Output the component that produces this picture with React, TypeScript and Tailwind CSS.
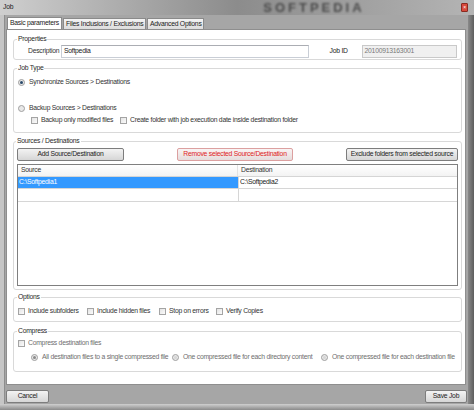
import { ReactNode } from "react";

function GroupBox({ title, className, children }: { title: string; className?: string; children: ReactNode }) {
    return (
        <fieldset className={`min-w-0 border border-[#d9d9d9] rounded-[3px] ${className ?? ""}`}>
            <legend className="leading-[8px] px-[1px] -ml-[1px] text-[#2a2a2a]">{title}</legend>
            {children}
        </fieldset>
    );
}

function CheckBox({ label, disabled = false, className }: { label: string; disabled?: boolean; className?: string }) {
    return (
        <div className={`flex items-center h-[9px] shrink-0 ${className ?? ""}`}>
            <div className="shrink-0 w-[7px] h-[7px] border border-[#a4a4a4] bg-gradient-to-br from-[#e4e4e4] to-[#fbfbfb]" />
            <span className={`ml-[3px] ${disabled ? "text-[#6e6e6e]" : "text-[#333]"}`}>{label}</span>
        </div>
    );
}

function Radio({
    label,
    checked = false,
    disabled = false,
    className,
}: {
    label: string;
    checked?: boolean;
    disabled?: boolean;
    className?: string;
}) {
    return (
        <div className={`flex items-center h-[9px] shrink-0 ${className ?? ""}`}>
            <div className="shrink-0 w-[7px] h-[7px] rounded-full border border-[#a0a0a0] bg-[#e8e8e8] flex items-center justify-center">
                {checked && <div className={`w-[3px] h-[3px] rounded-full ${disabled ? "bg-[#8a8a8a]" : "bg-[#2a4a6a]"}`} />}
                {!checked && disabled && <div className="w-[3px] h-[3px] rounded-full bg-[#d6d6d6]" />}
            </div>
            <span className={`ml-[4px] ${disabled ? "text-[#6e6e6e]" : "text-[#333]"}`}>{label}</span>
        </div>
    );
}

function Button({ children, className, danger = false }: { children: ReactNode; className?: string; danger?: boolean }) {
    return (
        <button
            className={`h-[13px] rounded-[2px] border flex items-center justify-center leading-none ${
                danger
                    ? "border-[#dca0a0] bg-gradient-to-b from-[#f9f4f4] to-[#e6dcdc] text-[#e02424]"
                    : "border-[#7d7d7d] bg-gradient-to-b from-[#f3f3f3] to-[#d6d6d6] text-[#222]"
            } ${className ?? ""}`}
        >
            {children}
        </button>
    );
}

export default function App() {
    return (
        <div className="w-[474px] h-[410px] flex flex-col overflow-hidden whitespace-nowrap bg-[#9e9e9e] font-['Liberation_Sans',Arial,sans-serif] text-[6.8px] tracking-[-0.25px] text-[#333]">
            {/* title bar */}
            <div className="h-[15px] flex items-center bg-gradient-to-r from-[#cfcfcf] via-[#8c8c8c] to-[#b4b4b4]">
                <span className="ml-[3px] text-[#1e1e1e]">Job</span>
                <span className="ml-[250px] text-[13px] font-bold tracking-[3px] text-[#4a4a4a] blur-[1.2px] leading-[14px]">
                    SOFTPEDIA
                </span>
                <div className="ml-auto mr-[6px] w-[7px] h-[9px] rounded-[1px] bg-[#d84a3c] border border-[#8a2a20] flex items-center justify-center text-[5px] text-white leading-none">
                    ×
                </div>
            </div>

            <div className="flex flex-1 min-h-0">
                <div className="w-[5px] shrink-0 bg-[#c6c6c6] border-r border-[#8e8e8e]" />
                <div className="flex-1 min-w-0 flex flex-col bg-[#a6a6a6]">
                    {/* tabs */}
                    <div className="h-[14px] flex items-end pl-[2px]">
                        <div className="h-[12px] w-[55px] bg-white border border-b-0 border-[#8a8a8a] flex items-center pl-[2px] text-[#222]">
                            Basic parameters
                        </div>
                        <div className="h-[11px] w-[83px] ml-[1px] bg-gradient-to-b from-[#f4f4f4] to-[#dcdcdc] border border-b-0 border-[#8a8a8a] flex items-center pl-[2px] text-[#222]">
                            Files Inclusions / Exclusions
                        </div>
                        <div className="h-[11px] w-[57px] ml-[1px] bg-gradient-to-b from-[#f4f4f4] to-[#dcdcdc] border border-b-0 border-[#8a8a8a] flex items-center pl-[2px] text-[#222]">
                            Advanced Options
                        </div>
                    </div>

                    {/* panel */}
                    <div className="flex-1 min-w-0 overflow-hidden ml-[1px] mr-[2px] bg-white border border-[#8e8e8e] pl-[6px] pr-[3px] pt-[5px] flex flex-col">
                        <GroupBox title="Properties" className="px-[4px] pt-[2px] pb-[1px]">
                            <div className="flex items-center h-[13px]">
                                <span className="ml-[10px] w-[28px]">Description</span>
                                <div className="ml-[5px] w-[249px] h-[13px] border border-[#c9ced6] border-t-[#abadb3] flex items-center pl-[2px] text-[#222]">
                                    Softpedia
                                </div>
                                <span className="ml-[21px] w-[18px] text-[#222]">Job ID</span>
                                <div className="ml-[14px] w-[96px] h-[13px] border border-[#c9c9c9] bg-[#f0f0f0] flex items-center pl-[2px] text-[#7a7a7a]">
                                    20100913163001
                                </div>
                            </div>
                        </GroupBox>

                        <GroupBox title="Job Type" className="mt-[4px] px-[4px] pt-[6px] pb-[7px]">
                            <Radio label="Synchronize Sources > Destinations" checked />
                            <div className="mt-[17px]">
                                <Radio label="Backup Sources > Destinations" />
                            </div>
                            <div className="flex items-center mt-[3px] pl-[13px]">
                                <CheckBox className="w-[89px]" label="Backup only modified files" />
                                <CheckBox label="Create folder with job execution date inside destination folder" />
                            </div>
                        </GroupBox>

                        <GroupBox title="Sources / Destinations" className="mt-[4px] px-[3px] pt-[3px] pb-[3px]">
                            <div className="flex justify-between">
                                <Button className="w-[107px]">Add Source/Destination</Button>
                                <Button className="w-[116px]" danger>
                                    Remove selected Source/Destination
                                </Button>
                                <Button className="w-[112px]">Exclude folders from selected source</Button>
                            </div>
                            <div className="mt-[3px] h-[122px] border border-[#7f7f7f] bg-white">
                                <div className="grid grid-cols-[220px_1fr] h-[12px] border-b border-[#d5d5d5] bg-gradient-to-b from-white to-[#f3f3f3]">
                                    <div className="flex items-center pl-[3px] border-r border-[#e2e2e2]">Source</div>
                                    <div className="flex items-center pl-[3px]">Destination</div>
                                </div>
                                <div className="grid grid-cols-[220px_1fr] h-[12px] border-b border-[#d6d6d6]">
                                    <div className="flex items-center pl-[1px] bg-[#3399ff] text-white">C:\Softpedia1</div>
                                    <div className="flex items-center pl-[1px] border-l border-[#d6d6d6] text-[#222]">
                                        C:\Softpedia2
                                    </div>
                                </div>
                                <div className="grid grid-cols-[220px_1fr] h-[13px] border-b border-[#d6d6d6]">
                                    <div />
                                    <div className="border-l border-[#d6d6d6]" />
                                </div>
                            </div>
                        </GroupBox>

                        <GroupBox title="Options" className="mt-[3px] px-[4px] pt-[6px] pb-[5px]">
                            <div className="flex items-center">
                                <CheckBox className="w-[69px]" label="Include subfolders" />
                                <CheckBox className="w-[72px]" label="Include hidden files" />
                                <CheckBox className="w-[57px]" label="Stop on errors" />
                                <CheckBox label="Verify Copies" />
                            </div>
                        </GroupBox>

                        <GroupBox title="Compress" className="mt-[5px] px-[4px] pt-[4px] pb-[9px]">
                            <CheckBox label="Compress destination files" disabled />
                            <div className="flex items-center mt-[5px] pl-[13px]">
                                <Radio className="w-[141px]" label="All destination files to a single compressed file" checked disabled />
                                <Radio className="w-[149px]" label="One compressed file for each directory content" disabled />
                                <Radio label="One compressed file for each destination file" disabled />
                            </div>
                        </GroupBox>
                    </div>

                    {/* bottom bar */}
                    <div className="h-[19px] flex items-start justify-between pt-[5px] pl-[1px] pr-[1px]">
                        <Button className="w-[43px]">Cancel</Button>
                        <Button className="w-[42px]">Save Job</Button>
                    </div>
                </div>
                <div className="w-[6px] shrink-0 bg-gradient-to-r from-[#8a8a8a] to-[#5e5e5e]" />
            </div>
            <div className="h-[6px] bg-gradient-to-b from-[#d0d0d0] to-[#8a8a8a]" />
        </div>
    );
}
